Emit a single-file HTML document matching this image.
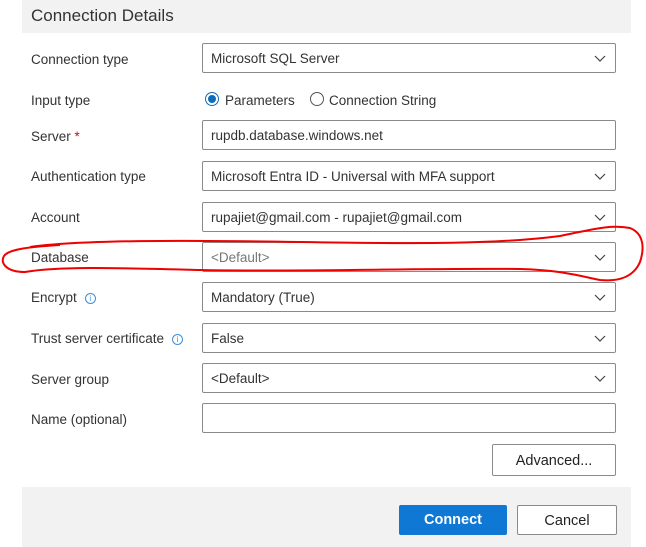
<!DOCTYPE html><html><head><style>
body{margin:0;width:646px;height:547px;background:#fff;font-family:"Liberation Sans",sans-serif;position:relative;overflow:hidden;color:#333}
.hd{position:absolute;left:22px;top:0;width:609px;height:33px;background:#f2f2f2}
.hd span{position:absolute;left:9px;top:6px;font-size:17px;color:#333}
.l{position:absolute;left:31px;font-size:13.5px;color:#333}
.b{position:absolute;left:202px;width:412px;height:28px;border:1px solid #8a8a8a;border-radius:2px;font-size:13.5px;line-height:30px;text-indent:8px;color:#333;box-sizing:content-box}
.b svg{position:absolute;right:9px;top:11px}
.i{display:inline-block;width:9px;height:9px;border:1px solid #3a8ee6;border-radius:50%;font-size:8px;line-height:9px;text-align:center;color:#3a8ee6;margin-left:8px;vertical-align:1px}
.ft{position:absolute;left:22px;top:487px;width:609px;height:60px;background:#f2f2f2}
.btn{position:absolute;font-size:14.5px;text-align:center;box-sizing:border-box;border-radius:2px}
</style></head><body>
<div class="hd"><span>Connection Details</span></div>
<div class="l" style="top:52px">Connection type</div>
<div class="b" style="top:43px">Microsoft SQL Server<svg width="12" height="8"><path d="M1 1l5 5 5-5" fill="none" stroke="#444" stroke-width="1.2"/></svg></div>
<div class="l" style="top:93px">Input type</div>
<div style="position:absolute;left:205px;top:92px;width:14px;height:14px;border:1px solid #0f6cbd;border-radius:50%;box-sizing:border-box"><div style="position:absolute;left:2px;top:2px;width:8px;height:8px;border-radius:50%;background:#0f6cbd"></div></div>
<div class="l" style="left:225px;top:93px">Parameters</div>
<div style="position:absolute;left:310px;top:92px;width:14px;height:14px;border:1px solid #555;border-radius:50%;box-sizing:border-box"></div>
<div class="l" style="left:329px;top:93px">Connection String</div>
<div class="l" style="top:129px">Server<span style="color:#c50f1f"> *</span></div>
<div class="b" style="top:120px">rupdb.database.windows.net</div>
<div class="l" style="top:169px">Authentication type</div>
<div class="b" style="top:161px">Microsoft Entra ID - Universal with MFA support<svg width="12" height="8"><path d="M1 1l5 5 5-5" fill="none" stroke="#444" stroke-width="1.2"/></svg></div>
<div class="l" style="top:210px">Account</div>
<div class="b" style="top:202px">rupajiet@gmail.com - rupajiet@gmail.com<svg width="12" height="8"><path d="M1 1l5 5 5-5" fill="none" stroke="#444" stroke-width="1.2"/></svg></div>
<div class="l" style="top:250px">Database</div>
<div class="b" style="top:242px;color:#777">&lt;Default&gt;<svg width="12" height="8"><path d="M1 1l5 5 5-5" fill="none" stroke="#444" stroke-width="1.2"/></svg></div>
<div class="l" style="top:290px">Encrypt<span class="i">i</span></div>
<div class="b" style="top:282px">Mandatory (True)<svg width="12" height="8"><path d="M1 1l5 5 5-5" fill="none" stroke="#444" stroke-width="1.2"/></svg></div>
<div class="l" style="top:331px">Trust server certificate<span class="i">i</span></div>
<div class="b" style="top:323px">False<svg width="12" height="8"><path d="M1 1l5 5 5-5" fill="none" stroke="#444" stroke-width="1.2"/></svg></div>
<div class="l" style="top:372px">Server group</div>
<div class="b" style="top:363px">&lt;Default&gt;<svg width="12" height="8"><path d="M1 1l5 5 5-5" fill="none" stroke="#444" stroke-width="1.2"/></svg></div>
<div class="l" style="top:412px">Name (optional)</div>
<div class="b" style="top:403px"></div>
<div class="btn" style="left:492px;top:444px;width:124px;height:32px;border:1px solid #8a8a8a;line-height:32px;color:#222">Advanced...</div>
<div class="ft"></div>
<div class="btn" style="left:399px;top:505px;width:108px;height:30px;background:#0f78d4;color:#fff;line-height:31px;font-weight:bold">Connect</div>
<div class="btn" style="left:517px;top:505px;width:100px;height:30px;border:1px solid #8a8a8a;background:#fff;line-height:30px;color:#222">Cancel</div>
<svg style="position:absolute;left:0;top:0" width="646" height="547"><path d="M30 247 C80 240 180 240 300 242 C420 244 500 244 560 236 C590 230 610 224 630 228 C645 234 644 250 640 262 C634 276 620 282 600 280 C580 276 560 270 520 269 C420 268 300 272 200 270 C120 268 60 266 25 272 C5 272 0 262 4 256 C8 250 25 247 60 245" fill="none" stroke="#e00" stroke-width="2"/></svg>
</body></html>
